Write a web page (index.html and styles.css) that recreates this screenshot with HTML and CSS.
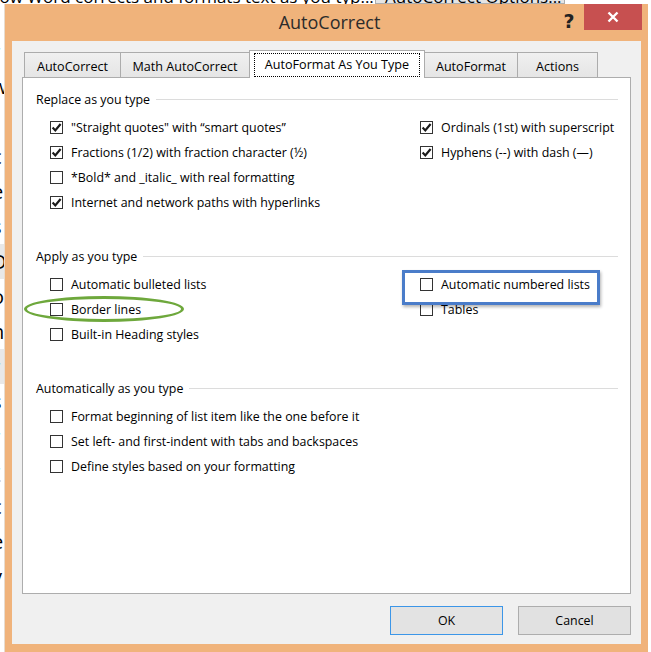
FILE: index.html
```html
<!DOCTYPE html>
<html>
<head>
<meta charset="utf-8">
<link rel="stylesheet" href="styles.css">
</head>
<body>
<div class="desk">
  <div class="doc-top">
    <span class="doc-line">How Word corrects and formats text as you typ...</span>
    <span class="doc-btn">AutoCorrect Options...</span>
  </div>
  <div class="doc-left">
    <div class="dl">r</div><div class="dl">w</div><div class="dl">l</div><div class="dl">c</div><div class="dl">e</div><div class="dl">s</div><div class="dl band">D</div><div class="dl">o</div><div class="dl">n</div><div class="dl band">r</div><div class="dl">s</div><div class="dl">r</div><div class="dl link">r</div><div class="dl">c</div><div class="dl">e</div><div class="dl">y</div>
  </div>

  <div class="window">
    <div class="titlebar">
      <div class="title">AutoCorrect</div>
      <div class="help">?</div>
      <div class="close">
        <svg width="12" height="12" viewBox="0 0 12 12"><path d="M1.5 1.5 L10.5 10.5 M10.5 1.5 L1.5 10.5" stroke="#fff" stroke-width="2.4" fill="none"/></svg>
      </div>
    </div>
    <div class="body">
      <div class="tabs">
        <div class="tab t1">AutoCorrect</div>
        <div class="tab t2">Math AutoCorrect</div>
        <div class="tab active t3"><span class="focus">AutoFormat As You Type</span></div>
        <div class="tab t4">AutoFormat</div>
        <div class="tab t5">Actions</div>
      </div>
      <div class="panel">
        <div class="group">
          <div class="ghead"><span class="glabel">Replace as you type</span><span class="rule"></span></div>
          <div class="grid">
            <div class="row"><span class="cb on"><svg width="11" height="11" viewBox="0 0 11 11"><path d="M1.6 5.6 L4.3 8.4 L9.6 2" stroke="#1a1a1a" stroke-width="2.2" fill="none"/></svg></span>"Straight quotes" with “smart quotes”</div>
            <div class="row"><span class="cb on"><svg width="11" height="11" viewBox="0 0 11 11"><path d="M1.6 5.6 L4.3 8.4 L9.6 2" stroke="#1a1a1a" stroke-width="2.2" fill="none"/></svg></span>Ordinals (1st) with superscript</div>
            <div class="row"><span class="cb on"><svg width="11" height="11" viewBox="0 0 11 11"><path d="M1.6 5.6 L4.3 8.4 L9.6 2" stroke="#1a1a1a" stroke-width="2.2" fill="none"/></svg></span>Fractions (1/2) with fraction character (½)</div>
            <div class="row"><span class="cb on"><svg width="11" height="11" viewBox="0 0 11 11"><path d="M1.6 5.6 L4.3 8.4 L9.6 2" stroke="#1a1a1a" stroke-width="2.2" fill="none"/></svg></span>Hyphens (--) with dash (—)</div>
            <div class="row"><span class="cb"></span>*Bold* and _italic_ with real formatting</div>
            <div class="row"></div>
            <div class="row"><span class="cb on"><svg width="11" height="11" viewBox="0 0 11 11"><path d="M1.6 5.6 L4.3 8.4 L9.6 2" stroke="#1a1a1a" stroke-width="2.2" fill="none"/></svg></span>Internet and network paths with hyperlinks</div>
            <div class="row"></div>
          </div>
        </div>
        <div class="group">
          <div class="ghead"><span class="glabel">Apply as you type</span><span class="rule"></span></div>
          <div class="grid">
            <div class="row"><span class="cb"></span>Automatic bulleted lists</div>
            <div class="row"><span class="cb"></span>Automatic numbered lists</div>
            <div class="row"><span class="cb"></span>Border lines</div>
            <div class="row"><span class="cb"></span>Tables</div>
            <div class="row"><span class="cb"></span>Built-in Heading styles</div>
            <div class="row"></div>
          </div>
        </div>
        <div class="group">
          <div class="ghead"><span class="glabel">Automatically as you type</span><span class="rule"></span></div>
          <div class="list">
            <div class="row"><span class="cb"></span>Format beginning of list item like the one before it</div>
            <div class="row"><span class="cb"></span>Set left- and first-indent with tabs and backspaces</div>
            <div class="row"><span class="cb"></span>Define styles based on your formatting</div>
          </div>
        </div>
        <div class="mark-ellipse"></div>
        <div class="mark-box"></div>
      </div>
      <div class="buttons">
        <div class="btn default">OK</div>
        <div class="btn">Cancel</div>
      </div>
    </div>
  </div>
</div>
</body>
</html>
```
FILE: styles.css
```css
html, body {
  margin: 0;
  padding: 0;
}
body {
  width: 651px;
  height: 652px;
  overflow: hidden;
  background: #fff;
  font-family: "Open Sans", "Noto Sans", sans-serif;
  color: #000;
}
.desk {
  position: relative;
  width: 651px;
  height: 652px;
  overflow: hidden;
}
.doc-top {
  display: flex;
  align-items: flex-start;
  height: 14px;
  margin-top: -10px;
  overflow: hidden;
  font-size: 17px;
  line-height: 14px;
  white-space: nowrap;
}
.doc-line {
  display: block;
  width: 388px;
  margin-left: -13px;
  flex: none;
}
.doc-btn {
  display: block;
  flex: none;
  width: 190px;
  height: 14px;
  box-sizing: border-box;
  padding-left: 9px;
  border: 1px solid #adadad;
  border-top: none;
  background: #e5e5e5;
}
.doc-left {
  display: flex;
  flex-direction: column;
  padding-top: 30px;
}
.dl {
  height: 35px;
  line-height: 35px;
  font-size: 20px;
  margin-left: -8px;
  width: 14px;
}
.dl.band { background: #e8e8e8; }
.dl.link { color: #1f4e9e; text-decoration: underline; }

.window {
  position: absolute;
  z-index: 5;
  left: 4px;
  top: 4px;
  width: 644px;
  height: 648px;
  background: #f0b37b;
  box-sizing: border-box;
  border-left: 1px solid #e8dccf;
  display: flex;
  flex-direction: column;
}
.titlebar {
  display: flex;
  height: 37px;
  flex: none;
}
.title {
  flex: 1;
  text-align: center;
  padding-left: 95px;
  font-size: 18px;
  line-height: 36px;
  color: #2b2b2b;
}
.help {
  width: 20px;
  margin-right: 5px;
  text-align: center;
  font-family: "DejaVu Sans", sans-serif;
  font-weight: bold;
  font-size: 19px;
  line-height: 34px;
  color: #222;
}
.close {
  width: 58px;
  height: 26px;
  margin-right: 6px;
  background: #c75050;
  display: flex;
  align-items: center;
  justify-content: center;
}
.body {
  flex: 1;
  margin: 0 7px 8px 7px;
  background: #f0f0f0;
  padding: 9px 10px 0 10px;
  display: flex;
  flex-direction: column;
}
.tabs {
  display: flex;
  align-items: flex-end;
  height: 27px;
  padding-left: 2px;
  font-size: 12.6px;
  position: relative;
  z-index: 2;
}
.tab {
  box-sizing: border-box;
  height: 25px;
  border: 1px solid #acacac;
  border-bottom: none;
  background: linear-gradient(#f0f0f0, #e5e5e5);
  display: flex;
  align-items: center;
  justify-content: center;
  padding-top: 2px;
  margin-left: -1px;
  white-space: nowrap;
}
.tab.t1 { width: 97px; margin-left: 0; }
.tab.t2 { width: 130px; }
.tab.t3 { width: 176px; }
.tab.t4 { width: 94px; }
.tab.t5 { width: 81px; }
.tab.active {
  height: 28px;
  margin-bottom: -1px;
  background: #fff;
  padding-top: 0;
  position: relative;
  z-index: 3;
}
.focus {
  border: 1px dotted #000;
  padding: 2px 2px 3px 2px;
  width: 160px;
  text-align: center;
}
.panel {
  position: relative;
  z-index: 1;
  height: 517px;
  box-sizing: border-box;
  border: 1px solid #adadad;
  background: #fff;
  padding: 11px 12px 0 13px;
  font-size: 12.4px;
}
.group + .group { margin-top: 31px; }
.ghead {
  display: flex;
  align-items: center;
  height: 20px;
  margin-bottom: 6px;
}
.glabel { white-space: nowrap; }
.rule {
  flex: 1;
  height: 1px;
  background: #dcdcdc;
  margin-left: 6px;
}
.grid {
  display: grid;
  grid-template-columns: 370px 1fr;
  padding-left: 14px;
}
.list {
  display: flex;
  flex-direction: column;
  padding-left: 14px;
}
.row {
  height: 25px;
  display: flex;
  align-items: center;
  white-space: nowrap;
}
.cb {
  flex: none;
  box-sizing: border-box;
  width: 13px;
  height: 13px;
  border: 1px solid #333;
  background: #fff;
  margin-right: 8px;
  display: flex;
  align-items: center;
  justify-content: center;
}
.mark-ellipse {
  position: absolute;
  left: 1px;
  top: 218px;
  width: 160px;
  height: 26px;
  box-sizing: border-box;
  border: 3px solid #6ea83c;
  border-radius: 50%;
}
.mark-box {
  position: absolute;
  left: 379px;
  top: 192px;
  width: 198px;
  height: 35px;
  box-sizing: border-box;
  border: 3px solid #4a7cc9;
  box-shadow: 1px 2px 3px rgba(0,0,0,0.3);
}
.buttons {
  display: flex;
  justify-content: flex-end;
  gap: 15px;
  margin-top: 12px;
}
.btn {
  box-sizing: border-box;
  width: 113px;
  height: 29px;
  border: 1px solid #adadad;
  background: #e1e1e1;
  font-size: 12.4px;
  display: flex;
  align-items: center;
  justify-content: center;
}
.btn.default {
  border-color: #3c96e8;
  background: #e3e3e3;
}
```
